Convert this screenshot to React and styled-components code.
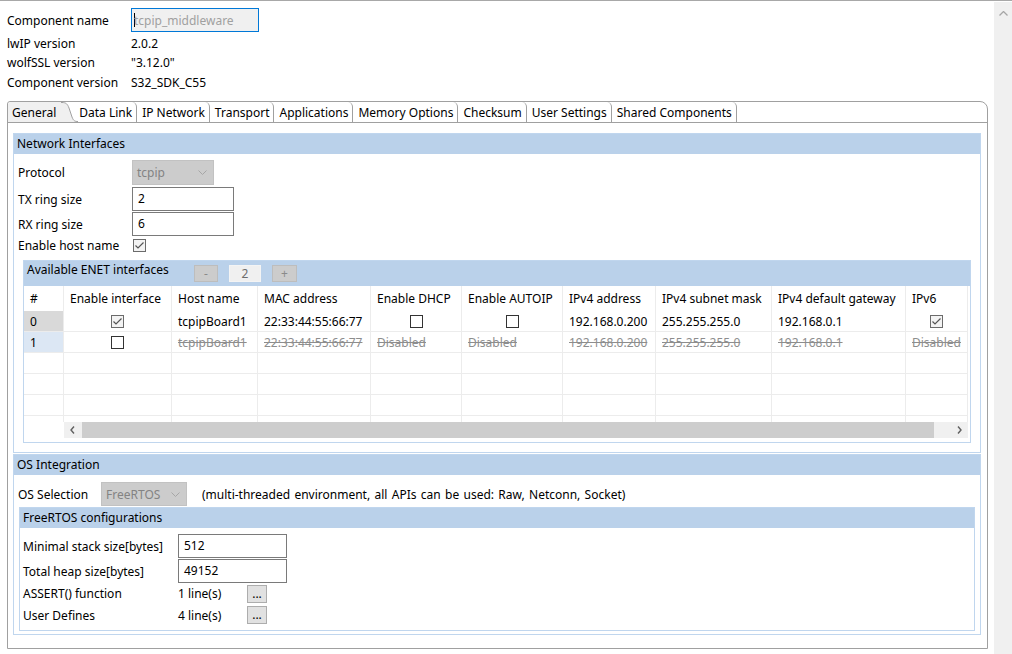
import React from 'react';
import styled, { createGlobalStyle } from 'styled-components';

const GlobalStyle = createGlobalStyle`
  html, body {
    margin: 0;
    padding: 0;
    background: #ffffff;
  }
  body {
    font-family: "Noto Sans", "Liberation Sans", sans-serif;
    font-size: 12px;
    color: #000000;
  }
  * {
    box-sizing: border-box;
  }
`;

const Page = styled.div`
  display: flex;
  width: 1012px;
  height: 654px;
  border-top: 1px solid #a8a8a8;
  overflow: hidden;
`;

const Main = styled.div`
  flex: 1;
  display: flex;
  flex-direction: column;
  padding: 7px 6px 0 7px;
`;

const VScroll = styled.div`
  width: 18px;
  margin-top: 1px;
  background: #f0f0f0;
  display: flex;
  justify-content: center;
  padding-top: 9px;
`;

const InfoGrid = styled.div`
  display: grid;
  grid-template-columns: 124px auto;
  grid-template-rows: 25px 20px 19px 20px;
  align-items: center;
`;

const NameInput = styled.div`
  align-self: start;
  width: 128px;
  height: 24px;
  border: 1px solid #0078d7;
  background: #f0f0f0;
  color: #a0a0a0;
  padding-left: 2px;
  display: flex;
  align-items: center;
`;

const Caret = styled.span`
  width: 1px;
  height: 14px;
  background: #000;
  margin-right: -1px;
`;

const Folder = styled.div`
  margin-top: 9px;
  height: 548px;
  border: 1px solid #a0a0a0;
  border-radius: 3px 8px 0 0;
  display: flex;
  flex-direction: column;
`;

const TabStrip = styled.div`
  display: flex;
  height: 21px;
  border-bottom: 1px solid #a0a0a0;
`;

const ActiveTab = styled.div`
  display: flex;
  align-items: stretch;
`;

const ActiveLabel = styled.span`
  background: #f0f0f0;
  padding: 1px 5px 0 4px;
  line-height: 19px;
  border-top-left-radius: 3px;
`;

const Tab = styled.div`
  display: flex;
  align-items: center;
  padding: 1px 4px 0 ${p => p.$pl ?? 5}px;
  border-right: 1px solid #a0a0a0;
  border-top-right-radius: 5px;
  white-space: nowrap;
  line-height: 19px;
`;

const TabBody = styled.div`
  flex: 1;
  display: flex;
  flex-direction: column;
  gap: 1px;
  padding: 10px 6px 0 5px;
`;

const Section = styled.div`
  border: 1px solid #c0d6ee;
  display: flex;
  flex-direction: column;
`;

const SectionHeader = styled.div`
  height: 20px;
  line-height: 20px;
  background: #bad1ea;
  padding-left: 3px;
`;

const SectionBody = styled.div`
  display: flex;
  flex-direction: column;
  padding: ${p => p.$pad};
`;

const FieldRow = styled.div`
  display: flex;
  align-items: center;
  height: ${p => p.$h}px;
  margin-top: ${p => p.$mt || 0}px;
`;

const Label = styled.span`
  width: ${p => p.$w}px;
  flex-shrink: 0;
  white-space: nowrap;
`;

const TextInput = styled.div`
  width: ${p => p.$w}px;
  height: 24px;
  border: 1px solid #7a7a7a;
  background: #fff;
  padding-left: 5px;
  line-height: 22px;
`;

const Combo = styled.div`
  width: ${p => p.$w}px;
  height: ${p => p.$h}px;
  background: #cccccc;
  border: 1px solid #c2c2c2;
  color: #838383;
  display: flex;
  align-items: center;
  justify-content: space-between;
  padding: 0 6px 0 4px;
`;

const Note = styled.span`
  margin-left: 15px;
  white-space: nowrap;
  word-spacing: 1.2px;
`;

const SubBox = styled.div`
  border: 1px solid #c0d6ee;
  margin: ${p => p.$m};
  display: flex;
  flex-direction: column;
`;

const EnetHeader = styled.div`
  height: 25px;
  background: #bad1ea;
  display: flex;
  align-items: flex-start;
  padding-left: 3px;
`;

const EnetTitle = styled.span`
  width: 167px;
  line-height: 18px;
`;

const SpinButton = styled.div`
  margin-top: 4px;
  margin-left: ${p => p.$ml || 0}px;
  width: ${p => p.$w}px;
  height: 17px;
  background: ${p => (p.$field ? '#f0f0f0' : '#cccccc')};
  border: 1px solid ${p => (p.$field ? '#f4f4f4' : '#bdbdbd')};
  color: ${p => (p.$field ? '#6d6d6d' : '#8a8a8a')};
  display: flex;
  align-items: center;
  justify-content: center;
  line-height: 1;
`;

const TableGrid = styled.div`
  display: grid;
  grid-template-columns: 40px 108px 86px 113px 91px 101px 93px 116px 134px 62px;
  grid-template-rows: 25px repeat(5, 21px) 6px 16px;
  margin-bottom: 4px;
`;

const HeadCell = styled.div`
  border-right: 1px solid #ececec;
  padding-left: 6px;
  line-height: 25px;
  white-space: nowrap;
  overflow: hidden;
`;

const Cell = styled.div`
  display: flex;
  align-items: center;
  justify-content: ${p => (p.$center ? 'center' : 'flex-start')};
  padding-left: ${p => (p.$center ? 0 : 6)}px;
  border-right: 1px solid #ececec;
  border-bottom: ${p => (p.$last ? 'none' : '1px solid #ececec')};
  background: ${p => p.$bg || 'transparent'};
  white-space: nowrap;
  overflow: hidden;
`;

const Struck = styled.span`
  color: #8d8d8d;
  text-decoration: line-through;
`;

const HScroll = styled.div`
  grid-column: 2 / -1;
  display: flex;
  align-items: stretch;
  background: #f0f0f0;
`;

const ScrollArrow = styled.div`
  width: 17px;
  display: flex;
  align-items: center;
  justify-content: center;
`;

const Thumb = styled.div`
  flex: 1;
  margin: 0 17px 0 1px;
  background: #cdcdcd;
`;

const Box = styled.span`
  width: 13px;
  height: 13px;
  border: 1px solid ${p => (p.$checked ? '#6b6b6b' : '#333333')};
  background: ${p => (p.$checked ? '#f3f3f3' : '#ffffff')};
  display: inline-flex;
  align-items: center;
  justify-content: center;
`;

const LinesText = styled.span`
  width: 69px;
`;

const DotsButton = styled.div`
  width: 20px;
  height: 18px;
  background: #e1e1e1;
  border: 1px solid #adadad;
  display: flex;
  align-items: flex-end;
  justify-content: center;
  line-height: 12px;
  padding-bottom: 2px;
`;

function Checkbox({ checked }) {
  return (
    <Box $checked={checked}>
      {checked && (
        <svg width="11" height="11" viewBox="0 0 11 11">
          <polyline points="1.5,5.5 4,8 9.5,2.5" fill="none" stroke="#555" strokeWidth="1.2" />
        </svg>
      )}
    </Box>
  );
}

function Chevron() {
  return (
    <svg width="9" height="5" viewBox="0 0 9 5">
      <polyline points="0.5,0.5 4.5,4.5 8.5,0.5" fill="none" stroke="#a6a6a6" strokeWidth="1" />
    </svg>
  );
}

function TabCurve() {
  return (
    <svg width="17" height="20" viewBox="0 0 17 20">
      <path d="M0 0 L1 0.5 C5 0.5 6.5 2 8 6 L11 15 C12.5 19 14 19.5 17 19.5 L17 20 L0 20 Z" fill="#f0f0f0" />
      <path d="M0 0.5 L1 0.5 C5 0.5 6.5 2 8 6 L11 15 C12.5 19 14 19.5 17 19.5" fill="none" stroke="#a0a0a0" strokeWidth="1" />
    </svg>
  );
}

const tabs = ['IP Network', 'Transport', 'Applications', 'Memory Options', 'Checksum', 'User Settings', 'Shared Components'];

const headers = ['#', 'Enable interface', 'Host name', 'MAC address', 'Enable DHCP', 'Enable AUTOIP', 'IPv4 address', 'IPv4 subnet mask', 'IPv4 default gateway', 'IPv6'];

function EnetTable() {
  const empty = [0, 1, 2];
  return (
    <TableGrid>
      {headers.map(h => <HeadCell key={h}>{h}</HeadCell>)}

      <Cell $bg="#d9d9d9">0</Cell>
      <Cell $center><Checkbox checked /></Cell>
      <Cell>tcpipBoard1</Cell>
      <Cell>22:33:44:55:66:77</Cell>
      <Cell $center><Checkbox /></Cell>
      <Cell $center><Checkbox /></Cell>
      <Cell>192.168.0.200</Cell>
      <Cell>255.255.255.0</Cell>
      <Cell>192.168.0.1</Cell>
      <Cell $center><Checkbox checked /></Cell>

      <Cell $bg="#dce7f4">1</Cell>
      <Cell $center><Checkbox /></Cell>
      <Cell><Struck>tcpipBoard1</Struck></Cell>
      <Cell><Struck>22:33:44:55:66:77</Struck></Cell>
      <Cell><Struck>Disabled</Struck></Cell>
      <Cell><Struck>Disabled</Struck></Cell>
      <Cell><Struck>192.168.0.200</Struck></Cell>
      <Cell><Struck>255.255.255.0</Struck></Cell>
      <Cell><Struck>192.168.0.1</Struck></Cell>
      <Cell><Struck>Disabled</Struck></Cell>

      {empty.map(r => headers.map(h => <Cell key={`${r}-${h}`} />))}
      {headers.map(h => <Cell key={`p-${h}`} $last />)}

      <div />
      <HScroll>
        <ScrollArrow>
          <svg width="5" height="8" viewBox="0 0 5 8">
            <polyline points="4,0.5 1,4 4,7.5" fill="none" stroke="#606060" strokeWidth="1.4" />
          </svg>
        </ScrollArrow>
        <Thumb />
        <ScrollArrow>
          <svg width="5" height="8" viewBox="0 0 5 8">
            <polyline points="1,0.5 4,4 1,7.5" fill="none" stroke="#606060" strokeWidth="1.4" />
          </svg>
        </ScrollArrow>
      </HScroll>
    </TableGrid>
  );
}

export default function App() {
  return (
    <>
      <GlobalStyle />
      <Page>
        <Main>
          <InfoGrid>
            <span>Component name</span>
            <NameInput><Caret />tcpip_middleware</NameInput>
            <span>lwIP version</span>
            <span>2.0.2</span>
            <span>wolfSSL version</span>
            <span>"3.12.0"</span>
            <span>Component version</span>
            <span>S32_SDK_C55</span>
          </InfoGrid>

          <Folder>
            <TabStrip>
              <ActiveTab>
                <ActiveLabel>General</ActiveLabel>
                <TabCurve />
              </ActiveTab>
              <Tab $pl={1}>Data Link</Tab>
              {tabs.map(t => <Tab key={t}>{t}</Tab>)}
            </TabStrip>

            <TabBody>
              <Section>
                <SectionHeader>Network Interfaces</SectionHeader>
                <SectionBody $pad="6px 9px 9px 4px">
                  <FieldRow $h={25}>
                    <Label $w={114}>Protocol</Label>
                    <Combo $w={82} $h={25}>tcpip<Chevron /></Combo>
                  </FieldRow>
                  <FieldRow $h={24} $mt={2}>
                    <Label $w={114}>TX ring size</Label>
                    <TextInput $w={102}>2</TextInput>
                  </FieldRow>
                  <FieldRow $h={24} $mt={1}>
                    <Label $w={114}>RX ring size</Label>
                    <TextInput $w={102}>6</TextInput>
                  </FieldRow>
                  <FieldRow $h={19}>
                    <Label $w={115}>Enable host name</Label>
                    <Checkbox checked />
                  </FieldRow>

                  <SubBox $m="5px 0 0 5px">
                    <EnetHeader>
                      <EnetTitle>Available ENET interfaces</EnetTitle>
                      <SpinButton $w={24}>-</SpinButton>
                      <SpinButton $w={32} $ml={11} $field>2</SpinButton>
                      <SpinButton $w={25} $ml={11}>+</SpinButton>
                    </EnetHeader>
                    <EnetTable />
                  </SubBox>
                </SectionBody>
              </Section>

              <Section>
                <SectionHeader>OS Integration</SectionHeader>
                <SectionBody $pad="7px 5px 3px 4px">
                  <FieldRow $h={24}>
                    <Label $w={83}>OS Selection</Label>
                    <Combo $w={86} $h={24}>FreeRTOS<Chevron /></Combo>
                    <Note>(multi-threaded environment, all APIs can be used: Raw, Netconn, Socket)</Note>
                  </FieldRow>

                  <SubBox $m="1px 0 0 1px">
                    <SectionHeader>FreeRTOS configurations</SectionHeader>
                    <SectionBody $pad="6px 3px 4px 3px">
                      <FieldRow $h={24}>
                        <Label $w={155}>Minimal stack size[bytes]</Label>
                        <TextInput $w={109}>512</TextInput>
                      </FieldRow>
                      <FieldRow $h={24} $mt={1}>
                        <Label $w={155}>Total heap size[bytes]</Label>
                        <TextInput $w={109}>49152</TextInput>
                      </FieldRow>
                      <FieldRow $h={21}>
                        <Label $w={155}>ASSERT() function</Label>
                        <LinesText>1 line(s)</LinesText>
                        <DotsButton>...</DotsButton>
                      </FieldRow>
                      <FieldRow $h={22}>
                        <Label $w={155}>User Defines</Label>
                        <LinesText>4 line(s)</LinesText>
                        <DotsButton>...</DotsButton>
                      </FieldRow>
                    </SectionBody>
                  </SubBox>
                </SectionBody>
              </Section>
            </TabBody>
          </Folder>
        </Main>
        <VScroll>
          <svg width="9" height="5" viewBox="0 0 9 5">
            <polyline points="0.5,4.5 4.5,0.5 8.5,4.5" fill="none" stroke="#a6a6a6" strokeWidth="1.3" />
          </svg>
        </VScroll>
      </Page>
    </>
  );
}
